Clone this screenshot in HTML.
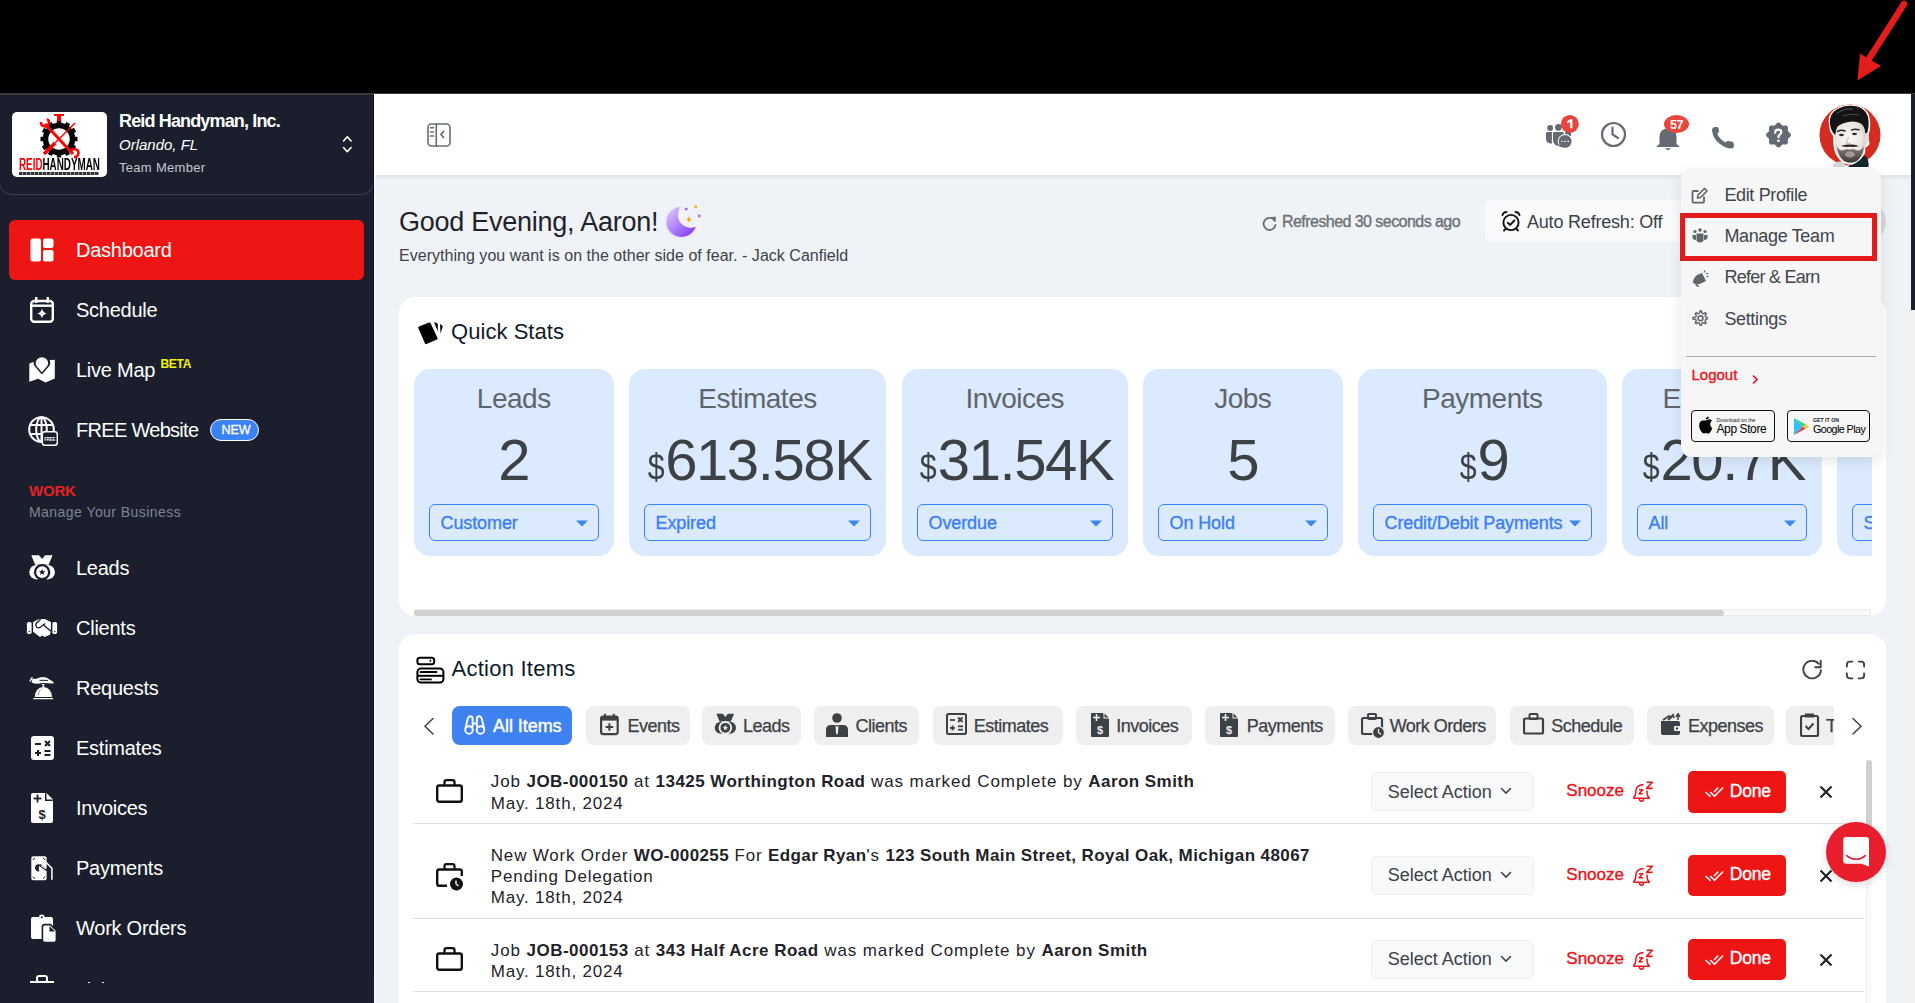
<!DOCTYPE html>
<html><head><meta charset="utf-8">
<style>
*{box-sizing:border-box;margin:0;padding:0}
html,body{width:1915px;height:1003px;overflow:hidden;background:#000;font-family:"Liberation Sans",sans-serif;position:relative}
.abs{position:absolute}
.t{position:absolute;white-space:nowrap;line-height:1}
b{font-weight:bold}
</style></head><body>

<div class="abs" style="left:0px;top:0px;width:1915px;height:93px;background:#000"></div>
<div class="abs" style="left:0px;top:93px;width:1915px;height:1px;background:#3a3a3a"></div>
<svg class="abs" style="left:1850px;top:0px;" width="65" height="90" viewBox="0 0 65 90"><line x1="54" y1="4" x2="17" y2="62" stroke="#e31c1c" stroke-width="6.5" stroke-linecap="round"/><polygon points="7.5,80.5 10,53.5 31,66" fill="#e31c1c"/></svg>
<div class="abs" style="left:0px;top:94px;width:374px;height:909px;background:#1b1f2d"></div>
<div class="abs" style="left:-1px;top:94px;width:375px;height:101px;border:1px solid #3a3f4b;border-radius:0 0 13px 13px;border-top:none"></div>
<div class="abs" style="left:373px;top:94px;width:1px;height:909px;background:#0e121c"></div>
<div class="abs" style="left:0px;top:94px;width:374px;height:1px;background:#3a3a3a"></div>
<div class="abs" style="left:12px;top:112px;width:95px;height:65px;background:#fff;border-radius:5px"></div>
<svg class="abs" style="left:12px;top:112px" width="95" height="65" viewBox="0 0 95 65">
<g transform="translate(47,27)">
<circle r="13.5" fill="none" stroke="#000" stroke-width="5.5"/>
<g fill="#000"><rect x="-2.2" y="-18.5" width="4.4" height="5" transform="rotate(0)"/><rect x="-2.2" y="-18.5" width="4.4" height="5" transform="rotate(30)"/><rect x="-2.2" y="-18.5" width="4.4" height="5" transform="rotate(60)"/><rect x="-2.2" y="-18.5" width="4.4" height="5" transform="rotate(90)"/><rect x="-2.2" y="-18.5" width="4.4" height="5" transform="rotate(120)"/><rect x="-2.2" y="-18.5" width="4.4" height="5" transform="rotate(150)"/><rect x="-2.2" y="-18.5" width="4.4" height="5" transform="rotate(180)"/><rect x="-2.2" y="-18.5" width="4.4" height="5" transform="rotate(210)"/><rect x="-2.2" y="-18.5" width="4.4" height="5" transform="rotate(240)"/><rect x="-2.2" y="-18.5" width="4.4" height="5" transform="rotate(270)"/><rect x="-2.2" y="-18.5" width="4.4" height="5" transform="rotate(300)"/><rect x="-2.2" y="-18.5" width="4.4" height="5" transform="rotate(330)"/></g>
<line x1="-14" y1="-15" x2="14" y2="15" stroke="#f00" stroke-width="3"/>
<line x1="16" y1="-16" x2="-4" y2="4" stroke="#f00" stroke-width="1.5"/>
<line x1="-4" y1="4" x2="-15" y2="15" stroke="#f00" stroke-width="3.5"/>
<path d="M-18,-17 a4,4 0 1,0 6,-3 M15,18 a4,4 0 1,0 -3,-6" stroke="#f00" stroke-width="2.5" fill="none"/>
<path d="M-5,-25 h10 v2 h-3 v5 h-4 v-5 h-3z" fill="#f00"/>
</g>
</svg>
<div class="t" style="left:19px;top:157.5px;height:13px;font-size:16px;font-weight:bold;line-height:13px;transform:scaleX(0.615);transform-origin:0 0;letter-spacing:0px"><span style="color:#f00">REID</span><span style="color:#000">HANDYMAN</span></div>
<div class="abs" style="left:19px;top:172px;width:80px;height:3px;background:repeating-linear-gradient(90deg,#333 0 3px,#999 3px 4px)"></div>
<div class="t" style="left:119.0px;top:112.1px;font-size:18px;color:#fff;font-weight:bold;letter-spacing:-0.85px;">Reid Handyman, Inc.</div>
<div class="t" style="left:119.0px;top:136.8px;font-size:15px;color:#fff;font-weight:normal;font-style:italic;">Orlando, FL</div>
<div class="t" style="left:119.0px;top:161.0px;font-size:13px;color:#c5c8ce;font-weight:normal;letter-spacing:0.3px;">Team Member</div>
<svg class="abs" style="left:340px;top:133px;" width="14" height="22" viewBox="0 0 14 22"><path d="M3.5,8 L7.3,3.8 L11.1,8 M3.5,14.5 L7.3,18.7 L11.1,14.5" stroke="#fff" stroke-width="1.6" fill="none" stroke-linecap="round" stroke-linejoin="round"/></svg>
<div class="abs" style="left:9px;top:220px;width:355px;height:60px;background:#ee1515;border-radius:6px"></div>
<svg class="abs" style="left:30px;top:238px;" width="24" height="24" viewBox="0 0 24 24"><rect x="0.5" y="0.5" width="10.5" height="23" rx="2" fill="#fff"/><rect x="13" y="0.5" width="10.5" height="9.5" rx="2" fill="#fff"/><rect x="13" y="12" width="10.5" height="11.5" rx="2" fill="#fff"/></svg>
<div class="t" style="left:76.0px;top:239.7px;font-size:20px;color:#fff;font-weight:normal;letter-spacing:-0.25px;">Dashboard</div>
<div class="t" style="left:76.0px;top:299.7px;font-size:20px;color:#fff;font-weight:normal;letter-spacing:-0.25px;">Schedule</div>
<div class="t" style="left:76.0px;top:359.7px;font-size:20px;color:#fff;font-weight:normal;letter-spacing:-0.25px;">Live Map</div>
<div class="t" style="left:160.5px;top:357.8px;font-size:12px;color:#f5f500;font-weight:bold;letter-spacing:-0.3px;">BETA</div>
<div class="t" style="left:76.0px;top:419.7px;font-size:20px;color:#fff;font-weight:normal;letter-spacing:-0.7px;">FREE Website</div>
<div class="abs" style="left:210px;top:419px;width:49px;height:22px;background:#3b82f6;border:1.5px solid #fff;border-radius:11px"></div>
<div class="t" style="left:221.5px;top:424.4px;font-size:12.5px;color:#fff;font-weight:normal;letter-spacing:-0.1px;-webkit-text-stroke:0.35px #fff;">NEW</div>
<div class="t" style="left:29.0px;top:482.8px;font-size:15px;color:#e42222;font-weight:bold;letter-spacing:-0.2px;">WORK</div>
<div class="t" style="left:29.0px;top:504.6px;font-size:14px;color:#7d8594;font-weight:normal;letter-spacing:0.45px;">Manage Your Business</div>
<div class="t" style="left:76.0px;top:557.7px;font-size:20px;color:#fff;font-weight:normal;letter-spacing:-0.25px;">Leads</div>
<div class="t" style="left:76.0px;top:617.7px;font-size:20px;color:#fff;font-weight:normal;letter-spacing:-0.25px;">Clients</div>
<div class="t" style="left:76.0px;top:677.7px;font-size:20px;color:#fff;font-weight:normal;letter-spacing:-0.25px;">Requests</div>
<div class="t" style="left:76.0px;top:737.7px;font-size:20px;color:#fff;font-weight:normal;letter-spacing:-0.25px;">Estimates</div>
<div class="t" style="left:76.0px;top:797.7px;font-size:20px;color:#fff;font-weight:normal;letter-spacing:-0.25px;">Invoices</div>
<div class="t" style="left:76.0px;top:857.7px;font-size:20px;color:#fff;font-weight:normal;letter-spacing:-0.25px;">Payments</div>
<div class="t" style="left:76.0px;top:917.7px;font-size:20px;color:#fff;font-weight:normal;letter-spacing:-0.25px;">Work Orders</div>
<svg class="abs" style="left:30px;top:297px;" width="24" height="26" viewBox="0 0 24 26"><rect x="1.2" y="4" width="21.6" height="20.8" rx="3" fill="none" stroke="#fff" stroke-width="2.4"/><rect x="1" y="7.5" width="22" height="2.4" fill="#fff"/><rect x="5" y="0" width="2.4" height="6" fill="#fff"/><rect x="16.6" y="0" width="2.4" height="6" fill="#fff"/><path d="M12,11.5 Q12.8,15.7 17,16.5 Q12.8,17.3 12,21.5 Q11.2,17.3 7,16.5 Q11.2,15.7 12,11.5z" fill="#fff"/></svg>
<svg class="abs" style="left:29px;top:357px;" width="27" height="27" viewBox="0 0 27 27"><path d="M0.3,6.5 L5,4.8 L22,3 L25.8,2.8 L25.8,21.6 L16.5,25.5 L9.3,21.7 L0.3,24.8z" fill="#fff"/><path d="M12.9,17.5 L6.8,10.5 Q4.5,8 4.5,6.3 A8.4,8.4 0 0,1 21.3,6.3 Q21.3,8 19,10.5z" fill="#1b1f2d"/><path d="M12.9,15.3 L8.3,9.9 Q6.6,8 6.6,6.5 A6.3,6.3 0 0,1 19.2,6.5 Q19.2,8 17.5,9.9z" fill="#fff"/></svg>
<svg class="abs" style="left:28px;top:416px;" width="30" height="30" viewBox="0 0 30 30"><g fill="none" stroke="#fff" stroke-width="2"><circle cx="13.5" cy="13.5" r="12.3"/><ellipse cx="13.5" cy="13.5" rx="5.3" ry="12.3"/><line x1="1.5" y1="9" x2="25.5" y2="9"/><line x1="1.5" y1="18" x2="25.5" y2="18"/><line x1="13.5" y1="1.2" x2="13.5" y2="25.8"/></g><rect x="14.3" y="15.8" width="15" height="13.5" rx="2.5" fill="#1b1f2d" stroke="#fff" stroke-width="1.5"/><text x="21.8" y="25" font-size="5.6" font-family="Liberation Sans" font-weight="bold" fill="#fff" text-anchor="middle" textLength="11" lengthAdjust="spacingAndGlyphs">FREE</text></svg>
<svg class="abs" style="left:29px;top:555px;" width="27" height="26" viewBox="0 0 27 26"><path d="M2.3,0.2 L10,0.2 L13.1,4.1 L16.2,0.2 L23.6,0.2 L19.7,9.7 L6.1,9.7z" fill="#fff"/><circle cx="7.6" cy="17.2" r="7.3" fill="#fff"/><circle cx="18.6" cy="17.2" r="7.3" fill="#fff"/><circle cx="13.1" cy="17.2" r="8.2" fill="#1b1f2d"/><circle cx="13.1" cy="17.2" r="5.9" fill="#fff"/><path d="M13.1,14 l0.95,2 2.2,.25 -1.65,1.5 .45,2.2 -1.95,-1.1 -1.95,1.1 .45,-2.2 -1.65,-1.5 2.2,-.25z" fill="#1b1f2d"/></svg>
<svg class="abs" style="left:26px;top:619px;" width="32" height="19" viewBox="0 0 32 19"><rect x="0.9" y="2.9" width="4.7" height="12" rx="1.6" fill="#fff"/><rect x="26.4" y="2.9" width="4.7" height="12" rx="1.6" fill="#fff"/><circle cx="3.3" cy="12.5" r=".75" fill="#1b1f2d"/><circle cx="28.7" cy="12.5" r=".75" fill="#1b1f2d"/><path d="M7.1,2.9 L12.8,0.2 L18.8,0.1 L24.9,3 L24.9,12.2 L23.9,15.8 L18.5,17.9 L16.4,16.4 L14,17.9 L7.1,12.8z" fill="#fff"/><path d="M14.6,0.3 L10.6,4 Q8.8,6.3 10.8,8.3 Q12.6,9.6 14.7,8 L19.3,4.4 M17.9,6.3 L24.8,12.2" stroke="#1b1f2d" stroke-width="1.3" fill="none"/></svg>
<svg class="abs" style="left:28px;top:676px;" width="28" height="25" viewBox="0 0 28 25"><path d="M1.2,5.2 L3.6,0.9 L4.9,1.5 L2.5,5.8z" fill="#fff"/><path d="M4.6,2.6 Q7,3.3 9,2.6 Q12,1 15.5,1.1 Q19,1.4 21.5,3.5 Q24.5,5 25.8,6.5 L25.5,7.3 Q23.5,7.8 21,7.3 Q17.5,7 14,7.1 Q10,7.9 6.5,7.6 Q4.5,7.2 3.6,6.3z" fill="#fff"/><path d="M11.8,4.3 L19.6,4.4" stroke="#1b1f2d" stroke-width="1" stroke-linecap="round"/><ellipse cx="15.2" cy="8.6" rx="1.8" ry=".7" fill="#fff"/><rect x="14.4" y="9.4" width="1.8" height="1.6" fill="#fff"/><path d="M6.8,20.9 Q7.5,11.2 15.3,10.9 Q23.2,11.2 24.1,20.9z" fill="#fff"/><path d="M10.5,18.5 Q10.8,14.5 13.5,13" stroke="#1b1f2d" stroke-width=".8" fill="none" stroke-dasharray="1.2 .8"/><rect x="5.2" y="22" width="20" height="1.3" rx=".5" fill="#fff"/></svg>
<svg class="abs" style="left:31px;top:736px;" width="23" height="24" viewBox="0 0 23 24"><rect x="0" y="0" width="23" height="24" rx="3" fill="#fff"/><g stroke="#1b1f2d" stroke-width="2"><line x1="4" y1="8" x2="10" y2="8"/><line x1="14" y1="5" x2="19" y2="10"/><line x1="19" y1="5" x2="14" y2="10"/><line x1="4" y1="17" x2="10" y2="17"/><line x1="7" y1="14" x2="7" y2="20"/><line x1="13.5" y1="15" x2="19.5" y2="15"/><line x1="13.5" y1="19" x2="19.5" y2="19"/></g></svg>
<svg class="abs" style="left:31px;top:793px;" width="22" height="30" viewBox="0 0 22 30"><path d="M0,2 a2,2 0 0,1 2,-2 L14,0 L22,8 L22,28 a2,2 0 0,1 -2,2 L2,30 a2,2 0 0,1 -2,-2z" fill="#fff"/><path d="M14,0 L14,8 L22,8" fill="#1b1f2d"/><path d="M15.5,0 L15.5,6.5 L22,6.5z" fill="#fff"/><g stroke="#1b1f2d" stroke-width="1.8"><line x1="2.5" y1="5.5" x2="10.5" y2="5.5"/><line x1="6.5" y1="1.5" x2="6.5" y2="9.5"/></g><text x="11" y="26" font-size="13" font-weight="bold" font-family="Liberation Sans" fill="#1b1f2d" text-anchor="middle">$</text></svg>
<svg class="abs" style="left:31px;top:856px;" width="23" height="25" viewBox="0 0 23 25"><rect x="0.3" y="0.2" width="15.3" height="24" rx="1.8" fill="#fff"/><g stroke="#1b1f2d" stroke-width="1" fill="none"><path d="M2,4 Q2.5,2.5 4,2"/><path d="M12,2 Q13.5,2.5 14,4"/><path d="M2,20.5 Q2.5,22 4,22.5"/><path d="M12,22.5 Q13.5,22 14,20.5"/></g><path d="M9.5,8.8 A3.6,3.6 0 1,0 8.5,15.3 Q6.5,12 9.5,8.8z" fill="#1b1f2d"/><path d="M9.6,9.5 L15,13.5" stroke="#1b1f2d" stroke-width="2.2" stroke-linecap="round"/><path d="M10.5,9.8 L14.5,12.6" stroke="#fff" stroke-width="1.2" stroke-linecap="round"/><path d="M15.3,6.5 L20.9,12.2 L20.9,23.8" stroke="#fff" stroke-width="1.5" fill="none"/></svg>
<svg class="abs" style="left:31px;top:914px;" width="27" height="30" viewBox="0 0 27 30"><rect x="0" y="3" width="22" height="22" rx="2" fill="#fff"/><circle cx="10.8" cy="3.2" r="2.8" fill="#fff"/><circle cx="10.8" cy="3.3" r="1" fill="#1b1f2d"/><path d="M11.4,13 a2.4,2.4 0 0,1 2.4,-2.4 L19.5,10.6 L25.4,16.5 L25.4,26.2 a2.4,2.4 0 0,1 -2.4,2.4 L13.8,28.6 a2.4,2.4 0 0,1 -2.4,-2.4z" fill="#fff" stroke="#1b1f2d" stroke-width="1.6"/><path d="M18.5,12 L18.5,17.5 L24,17.5z" fill="#1b1f2d"/></svg>
<div class="abs" style="left:0px;top:975px;width:374px;height:28px;background:#1b1f2d"></div>
<svg class="abs" style="left:30px;top:975px;" width="24" height="8" viewBox="0 0 24 8"><rect x="7" y="1" width="10" height="6" rx="2" fill="none" stroke="#fff" stroke-width="2"/><rect x="0" y="6" width="24" height="2" fill="#fff"/></svg>
<div class="abs" style="left:88px;top:982px;width:2px;height:1.5px;background:#fff"></div>
<div class="abs" style="left:102px;top:982px;width:2px;height:1.5px;background:#fff"></div>
<div class="abs" style="left:0px;top:983px;width:374px;height:20px;background:#1b1f2d"></div>
<div class="abs" style="left:374px;top:94px;width:1537px;height:81px;background:#fff"></div>
<div class="abs" style="left:374px;top:175px;width:1537px;height:5px;background:linear-gradient(#dfe3e8,#eff2f7)"></div>
<svg class="abs" style="left:427px;top:123px;" width="24" height="24" viewBox="0 0 24 24"><g fill="none" stroke="#676d75" stroke-width="1.6" stroke-linecap="round"><rect x="1" y="1" width="22" height="22" rx="3.5"/><line x1="9.3" y1="1" x2="9.3" y2="23"/><line x1="3.5" y1="4.8" x2="6.5" y2="4.8"/><line x1="3.5" y1="9" x2="6.5" y2="9"/><line x1="3.5" y1="13" x2="6.5" y2="13"/><path d="M16.5,8.5 L14,11.5 L16.5,14.5" stroke-width="1.8"/></g></svg>
<svg class="abs" style="left:1545px;top:113px;" width="40" height="38" viewBox="0 0 40 38"><g fill="#646b73"><circle cx="5.1" cy="15" r="2.9"/><circle cx="13.4" cy="14.3" r="3.4"/><path d="M1,20 a1,1 0 0,1 1,-1 L6.9,19 L6.9,30.7 Q1,30.7 1,25.5z"/><path d="M8,20 a1,1 0 0,1 1,-1 L17.5,19 Q18.8,19 18.8,20.2 L18.8,31 L14,33 Q8,32.5 8,27z"/><path d="M20.1,19 L25,19 Q26,19 26,20 L26,23 L20.1,23z"/></g><circle cx="20.1" cy="28.4" r="7.4" fill="#fff"/><circle cx="20.1" cy="28.4" r="6.4" fill="#646b73"/><path d="M14.5,28.5 L14.2,33.8 L19,34.5z" fill="#646b73"/><g fill="#fff"><rect x="16.3" y="27.8" width="1.4" height="1.2"/><rect x="19.4" y="27.8" width="1.4" height="1.2"/><rect x="22.5" y="27.8" width="1.4" height="1.2"/></g><circle cx="24.8" cy="10.9" r="9" fill="#e8453c"/><path d="M25.1,6.2 L27.4,6.2 L27.4,15.2 L25.1,15.2 L25.1,9 L22.2,10.4 L22.2,8.3z" fill="#fff"/></svg>
<svg class="abs" style="left:1600px;top:121px;" width="28" height="28" viewBox="0 0 28 28"><g fill="none" stroke="#646b73" stroke-width="2.2" stroke-linecap="round"><circle cx="13.5" cy="13.5" r="11.5"/><path d="M12.5,6.5 L12.5,13.5 L18,17"/></g></svg>
<svg class="abs" style="left:1655px;top:112px;" width="40" height="40" viewBox="0 0 40 40"><path d="M1.5,35 L4.5,31.5 L4.5,25.5 Q4.5,16.5 13,16.5 Q21.5,16.5 21.5,25.5 L21.5,31.5 L24.5,35z" fill="#646b73"/><path d="M10,36.3 h6 l-3,2.3z" fill="#646b73"/><ellipse cx="21.5" cy="12" rx="12.5" ry="9" fill="#e8453c"/><text x="21.5" y="16.5" font-size="12.5" font-weight="bold" font-family="Liberation Sans" fill="#fff" text-anchor="middle" letter-spacing="-0.5">57</text></svg>
<svg class="abs" style="left:1710px;top:124px;" width="27" height="27" viewBox="0 0 27 27"><path d="M4.5,3 Q2,3.5 2,6.5 Q3,15 10,20 Q16,24.5 21.5,24.5 Q24,24 24,21.5 L23.5,19 Q23,17.5 21.5,17.5 L18,17 Q16.5,17 15.5,18.5 Q12,17 9,13 Q7.5,10.5 7.5,9.5 Q9,8.5 9,7 L8.5,4 Q8,3 6.5,3z" fill="#646b73"/></svg>
<svg class="abs" style="left:1765px;top:122px" width="27" height="26" viewBox="0 0 27 26"><path d="M26.00,13.00 L25.90,13.61 L25.62,14.19 L25.19,14.73 L24.68,15.22 L24.15,15.67 L23.66,16.08 L23.28,16.50 L23.02,16.94 L22.89,17.44 L22.87,18.01 L22.92,18.64 L22.98,19.33 L22.99,20.04 L22.91,20.73 L22.70,21.34 L22.34,21.84 L21.84,22.20 L21.23,22.41 L20.54,22.49 L19.83,22.48 L19.14,22.42 L18.51,22.37 L17.94,22.39 L17.44,22.52 L17.00,22.78 L16.58,23.16 L16.17,23.65 L15.72,24.18 L15.23,24.69 L14.69,25.12 L14.11,25.40 L13.50,25.50 L12.89,25.40 L12.31,25.12 L11.77,24.69 L11.28,24.18 L10.83,23.65 L10.42,23.16 L10.00,22.78 L9.56,22.52 L9.06,22.39 L8.49,22.37 L7.86,22.42 L7.17,22.48 L6.46,22.49 L5.77,22.41 L5.16,22.20 L4.66,21.84 L4.30,21.34 L4.09,20.73 L4.01,20.04 L4.02,19.33 L4.08,18.64 L4.13,18.01 L4.11,17.44 L3.98,16.94 L3.72,16.50 L3.34,16.08 L2.85,15.67 L2.32,15.22 L1.81,14.73 L1.38,14.19 L1.10,13.61 L1.00,13.00 L1.10,12.39 L1.38,11.81 L1.81,11.27 L2.32,10.78 L2.85,10.33 L3.34,9.92 L3.72,9.50 L3.98,9.06 L4.11,8.56 L4.13,7.99 L4.08,7.36 L4.02,6.67 L4.01,5.96 L4.09,5.27 L4.30,4.66 L4.66,4.16 L5.16,3.80 L5.77,3.59 L6.46,3.51 L7.17,3.52 L7.86,3.58 L8.49,3.63 L9.06,3.61 L9.56,3.48 L10.00,3.22 L10.42,2.84 L10.83,2.35 L11.28,1.82 L11.77,1.31 L12.31,0.88 L12.89,0.60 L13.50,0.50 L14.11,0.60 L14.69,0.88 L15.23,1.31 L15.72,1.82 L16.17,2.35 L16.58,2.84 L17.00,3.22 L17.44,3.48 L17.94,3.61 L18.51,3.63 L19.14,3.58 L19.83,3.52 L20.54,3.51 L21.23,3.59 L21.84,3.80 L22.34,4.16 L22.70,4.66 L22.91,5.27 L22.99,5.96 L22.98,6.67 L22.92,7.36 L22.87,7.99 L22.89,8.56 L23.02,9.06 L23.28,9.50 L23.66,9.92 L24.15,10.33 L24.68,10.78 L25.19,11.27 L25.62,11.81 L25.90,12.39z" fill="#646b73"/><g transform="translate(13.5,13) scale(0.88) translate(-13.8,-13)"><path d="M10,10.5 Q10,7 13.5,7 Q17,7 17,10 Q17,12 14.8,13 Q13.8,13.5 13.8,15.5" stroke="#fff" stroke-width="2.5" fill="none" stroke-linecap="round"/><circle cx="13.8" cy="19.5" r="1.5" fill="#fff"/></g></svg>
<svg class="abs" style="left:1815px;top:100px;" width="70" height="70" viewBox="0 0 70 70"><defs><clipPath id="avc"><path d="M35,4.5 A30.5,30.5 0 1,1 34.9,4.5z M18,58 L56,58 L56,67 L18,67z"/></clipPath>
<radialGradient id="skin" cx="0.45" cy="0.42" r="0.62"><stop offset="0" stop-color="#fbf8f6"/><stop offset="0.65" stop-color="#ede5e1"/><stop offset="1" stop-color="#c4b8b3"/></radialGradient>
<linearGradient id="brd" x1="0" y1="0" x2="0" y2="1"><stop offset="0" stop-color="#8d8583"/><stop offset="1" stop-color="#3f3937"/></linearGradient></defs>
<circle cx="35" cy="35" r="30.5" fill="#d42c20"/>
<g clip-path="url(#avc)">
<path d="M16,68 Q20,60 29,62 L31,68z" fill="#d8d8d8"/>
<path d="M32,68 L45,56 L51,56 Q55,62 53,68z" fill="#15262c"/>
<path d="M14,24 Q12,13 22,8 Q32,2 45,6 Q54,10 55,20 Q56,28 53.5,35 L54.5,44 Q52,48 50.5,47 L50,53 Q46,61 38,64.5 Q29,65.5 24,59 Q19,53 18.5,45 L18,36 Q14,31 14,24z" fill="#fff"/>
<path d="M19.5,32 Q19.5,23 26.5,22 Q38,19.5 47,23 Q51,27 51,34 L51.5,40 Q52,44 49.5,47 L48.5,52.5 Q45.5,60 38,63 Q30,64 25.5,58 Q20.5,52 20,44z" fill="url(#skin)"/>
<ellipse cx="51.8" cy="39" rx="2.2" ry="4.6" fill="#e6ddd8"/>
</g>
<path d="M15,24 Q13.5,14 22.5,9 Q32,3.5 44,7 Q52.5,10.5 53.5,20 Q54,28 52,33.5 L50.2,33 Q50,26.5 46,23.5 Q40,20.5 33.5,22 Q26.5,23 22.5,26.5 Q20.5,30 20.2,35 Q16,31.5 15,24z" fill="#141414"/>
<path d="M22,13 Q30,8 38,9 M28,16 Q36,13 44,15" stroke="#4a4a4a" stroke-width="1.1" fill="none"/>
<path d="M21.5,45.5 Q23,56.5 29,61 Q35,64 42,61 Q48,56 49,46 Q46,51 42,50.5 Q38.5,48.5 35,49.5 Q31,48.5 27,50.5 Q23.5,50 21.5,45.5z" fill="url(#brd)"/>
<ellipse cx="35" cy="54.5" rx="5" ry="3" fill="#c9c0bd" opacity=".6"/>
<path d="M26,46 Q30,44 35,44.6 Q40,44 44,46 Q40,47.2 35,46.8 Q30,47.2 26,46z" fill="#2e2826"/>
<path d="M22.5,31.5 Q26,29.5 30,31 M36.5,30 Q40,28.5 44,29.8" stroke="#2a2a2a" stroke-width="1.5" fill="none" stroke-linecap="round"/>
<ellipse cx="26.5" cy="35" rx="2.5" ry="1.15" fill="#2a2a2a"/><ellipse cx="39.5" cy="34" rx="2.5" ry="1.15" fill="#2a2a2a"/>
<path d="M33.5,37 Q32.5,41.5 30.8,43 Q33,44 35.8,43.2" stroke="#c2b5b0" stroke-width="1" fill="none"/>
</svg>
<div class="abs" style="left:374px;top:180px;width:1537px;height:823px;background:#eff2f7"></div>
<div class="abs" style="left:374px;top:175px;width:2px;height:828px;background:#f7f8fb"></div>
<div class="t" style="left:399.0px;top:208.8px;font-size:27px;color:#1f2329;font-weight:normal;letter-spacing:-0.25px;">Good Evening, Aaron!</div>
<svg class="abs" style="left:660px;top:200px;" width="45" height="45" viewBox="0 0 45 45"><defs><linearGradient id="mg" x1="0" y1="0" x2="1" y2="1"><stop offset="0" stop-color="#e2d2fc"/><stop offset="1" stop-color="#7a2cf6"/></linearGradient><mask id="mm"><rect width="45" height="45" fill="#fff"/><circle cx="30.9" cy="14.9" r="13" fill="#000"/></mask><filter id="mb" x="-50%" y="-50%" width="200%" height="200%"><feGaussianBlur stdDeviation="1.5"/></filter></defs>
<circle cx="21.4" cy="23" r="15" fill="#b9a6e8" opacity=".35" filter="url(#mb)" mask="url(#mm)"/>
<circle cx="21.4" cy="21.9" r="15" fill="url(#mg)" mask="url(#mm)"/>
<path d="M29,16.5 Q29.6,19 32,19.5 Q29.6,20 29,22.5 Q28.4,20 26,19.5 Q28.4,19 29,16.5z" fill="#ffa500"/>
<circle cx="35.7" cy="6.8" r="1.5" fill="#ffaa10"/><circle cx="26.2" cy="9" r="1.6" fill="#a46cf8"/><circle cx="39.3" cy="16" r="1.4" fill="#a46cf8"/></svg>
<div class="t" style="left:399.0px;top:247.5px;font-size:16px;color:#3d4249;font-weight:normal;letter-spacing:0.03px;">Everything you want is on the other side of fear. - Jack Canfield</div>
<svg class="abs" style="left:1261px;top:215px;" width="17" height="17" viewBox="0 0 17 17"><path d="M13.5,5.5 A6,6 0 1,0 14.5,10" stroke="#6b7075" stroke-width="1.8" fill="none" stroke-linecap="round"/><path d="M10.5,2.5 L14.5,2 L14,6.5z" fill="#6b7075" stroke="#6b7075" stroke-width="1"/></svg>
<div class="t" style="left:1282.0px;top:213.8px;font-size:16px;color:#6b7075;font-weight:normal;letter-spacing:-0.55px;-webkit-text-stroke:0.35px #6b7075;">Refreshed 30 seconds ago</div>
<div class="abs" style="left:1846px;top:202px;width:40px;height:40px;background:#d9d9d9;border-radius:50%"></div>
<div class="abs" style="left:1485px;top:200px;width:230px;height:42px;background:#f9fafb;border-radius:6px"></div>
<svg class="abs" style="left:1500px;top:210px;" width="22" height="22" viewBox="0 0 22 22"><g fill="none" stroke="#111" stroke-width="1.9" stroke-linecap="round"><circle cx="11" cy="12.5" r="7.6"/><path d="M7.8,12.8 L10.2,15 L14.3,10.5"/><path d="M2.5,5 Q3.5,2 6.5,2 M19.5,5 Q18.5,2 15.5,2"/><line x1="5.5" y1="19" x2="4" y2="20.5"/><line x1="16.5" y1="19" x2="18" y2="20.5"/></g></svg>
<div class="t" style="left:1527.0px;top:212.8px;font-size:18px;color:#3c4043;font-weight:normal;letter-spacing:-0.2px;">Auto Refresh: Off</div>
<div class="abs" style="left:399px;top:297px;width:1487px;height:319px;background:#fff;border-radius:16px"></div>
<svg class="abs" style="left:417px;top:321px;" width="27" height="25" viewBox="0 0 27 25"><path d="M2.6,5.2 L12,1.5 Q13,1.1 13.5,2 L20.5,16.9 Q21,18 19.9,18.5 L9.5,23.1 Q8.4,23.5 8,22.4 L1.2,6.8 Q0.9,5.8 2.6,5.2z" fill="#000"/><path d="M17,1.3 Q19.5,1.2 20.8,3 L20.8,10.3z" fill="#000"/><path d="M23.1,3.1 Q25.5,4 25.7,5.8 L23.5,12.6z" fill="#000"/></svg>
<div class="t" style="left:451.0px;top:321.4px;font-size:22px;color:#0f1b2a;font-weight:normal;letter-spacing:0.05px;">Quick Stats</div>
<div class="abs" style="left:414px;top:609px;width:1457px;height:7px;background:#fafafa;border:1px solid #ececec"></div>
<div class="abs" style="left:414px;top:609.5px;width:1310px;height:6px;background:#cfd0d2;border-radius:3px"></div>
<div class="abs" style="left:414px;top:360px;width:1458px;height:200px;overflow:hidden">
<div class="abs" style="left:0px;top:9px;width:199.5px;height:187px;background:#dbeafe;border-radius:16px"></div>
<div class="t" style="left:0px;width:199.5px;text-align:center;top:24.5px;font-size:28px;color:#5f656c;letter-spacing:-0.5px">Leads</div>
<div class="t" style="left:0px;width:199.5px;text-align:center;top:70.9px;font-size:58px;color:#3c4146;letter-spacing:-1.4px">2</div>
<div class="abs" style="left:15px;top:144px;width:169.5px;height:37px;border:1px solid #3b82f6;border-radius:6px;overflow:hidden"><div class="t" style="left:10.5px;top:9.3px;font-size:18px;font-weight:normal;-webkit-text-stroke:0.35px #3b7ff0;color:#3b7ff0;letter-spacing:-0.1px">Customer</div><svg class="abs" style="right:10px;top:14.5px" width="12" height="7"><path d="M0,0.5 L12,0.5 L6,6.5z" fill="#3b82f6"/></svg></div>
<div class="abs" style="left:215px;top:9px;width:257px;height:187px;background:#dbeafe;border-radius:16px"></div>
<div class="t" style="left:215px;width:257px;text-align:center;top:24.5px;font-size:28px;color:#5f656c;letter-spacing:-0.5px">Estimates</div>
<div class="t" style="left:215px;width:257px;text-align:center;top:70.9px;font-size:58px;color:#3c4146;letter-spacing:-1.4px"><span style="display:inline-block;font-size:37px;letter-spacing:0;margin-right:1px;transform:scaleX(0.82);transform-origin:100% 100%;line-height:1">$</span>613.58K</div>
<div class="abs" style="left:230px;top:144px;width:227px;height:37px;border:1px solid #3b82f6;border-radius:6px;overflow:hidden"><div class="t" style="left:10.5px;top:9.3px;font-size:18px;font-weight:normal;-webkit-text-stroke:0.35px #3b7ff0;color:#3b7ff0;letter-spacing:-0.1px">Expired</div><svg class="abs" style="right:10px;top:14.5px" width="12" height="7"><path d="M0,0.5 L12,0.5 L6,6.5z" fill="#3b82f6"/></svg></div>
<div class="abs" style="left:488px;top:9px;width:225.5px;height:187px;background:#dbeafe;border-radius:16px"></div>
<div class="t" style="left:488px;width:225.5px;text-align:center;top:24.5px;font-size:28px;color:#5f656c;letter-spacing:-0.5px">Invoices</div>
<div class="t" style="left:488px;width:225.5px;text-align:center;top:70.9px;font-size:58px;color:#3c4146;letter-spacing:-1.4px"><span style="display:inline-block;font-size:37px;letter-spacing:0;margin-right:1px;transform:scaleX(0.82);transform-origin:100% 100%;line-height:1">$</span>31.54K</div>
<div class="abs" style="left:503px;top:144px;width:195.5px;height:37px;border:1px solid #3b82f6;border-radius:6px;overflow:hidden"><div class="t" style="left:10.5px;top:9.3px;font-size:18px;font-weight:normal;-webkit-text-stroke:0.35px #3b7ff0;color:#3b7ff0;letter-spacing:-0.1px">Overdue</div><svg class="abs" style="right:10px;top:14.5px" width="12" height="7"><path d="M0,0.5 L12,0.5 L6,6.5z" fill="#3b82f6"/></svg></div>
<div class="abs" style="left:729px;top:9px;width:199.5px;height:187px;background:#dbeafe;border-radius:16px"></div>
<div class="t" style="left:729px;width:199.5px;text-align:center;top:24.5px;font-size:28px;color:#5f656c;letter-spacing:-0.5px">Jobs</div>
<div class="t" style="left:729px;width:199.5px;text-align:center;top:70.9px;font-size:58px;color:#3c4146;letter-spacing:-1.4px">5</div>
<div class="abs" style="left:744px;top:144px;width:169.5px;height:37px;border:1px solid #3b82f6;border-radius:6px;overflow:hidden"><div class="t" style="left:10.5px;top:9.3px;font-size:18px;font-weight:normal;-webkit-text-stroke:0.35px #3b7ff0;color:#3b7ff0;letter-spacing:-0.1px">On Hold</div><svg class="abs" style="right:10px;top:14.5px" width="12" height="7"><path d="M0,0.5 L12,0.5 L6,6.5z" fill="#3b82f6"/></svg></div>
<div class="abs" style="left:944px;top:9px;width:248.5px;height:187px;background:#dbeafe;border-radius:16px"></div>
<div class="t" style="left:944px;width:248.5px;text-align:center;top:24.5px;font-size:28px;color:#5f656c;letter-spacing:-0.5px">Payments</div>
<div class="t" style="left:944px;width:248.5px;text-align:center;top:70.9px;font-size:58px;color:#3c4146;letter-spacing:-1.4px"><span style="display:inline-block;font-size:37px;letter-spacing:0;margin-right:1px;transform:scaleX(0.82);transform-origin:100% 100%;line-height:1">$</span>9</div>
<div class="abs" style="left:959px;top:144px;width:218.5px;height:37px;border:1px solid #3b82f6;border-radius:6px;overflow:hidden"><div class="t" style="left:10.5px;top:9.3px;font-size:18px;font-weight:normal;-webkit-text-stroke:0.35px #3b7ff0;color:#3b7ff0;letter-spacing:-0.1px">Credit/Debit Payments</div><svg class="abs" style="right:10px;top:14.5px" width="12" height="7"><path d="M0,0.5 L12,0.5 L6,6.5z" fill="#3b82f6"/></svg></div>
<div class="abs" style="left:1208px;top:9px;width:200px;height:187px;background:#dbeafe;border-radius:16px"></div>
<div class="t" style="left:1208px;width:200px;text-align:center;top:24.5px;font-size:28px;color:#5f656c;letter-spacing:-0.5px">Expenses</div>
<div class="t" style="left:1208px;width:200px;text-align:center;top:70.9px;font-size:58px;color:#3c4146;letter-spacing:-1.4px"><span style="display:inline-block;font-size:37px;letter-spacing:0;margin-right:1px;transform:scaleX(0.82);transform-origin:100% 100%;line-height:1">$</span>20.7K</div>
<div class="abs" style="left:1223px;top:144px;width:170px;height:37px;border:1px solid #3b82f6;border-radius:6px;overflow:hidden"><div class="t" style="left:10.5px;top:9.3px;font-size:18px;font-weight:normal;-webkit-text-stroke:0.35px #3b7ff0;color:#3b7ff0;letter-spacing:-0.1px">All</div><svg class="abs" style="right:10px;top:14.5px" width="12" height="7"><path d="M0,0.5 L12,0.5 L6,6.5z" fill="#3b82f6"/></svg></div>
<div class="abs" style="left:1423px;top:9px;width:200px;height:187px;background:#dbeafe;border-radius:16px"></div>
<div class="t" style="left:1423px;width:200px;text-align:center;top:24.5px;font-size:28px;color:#5f656c;letter-spacing:-0.5px">Schedule</div>
<div class="t" style="left:1423px;width:200px;text-align:center;top:70.9px;font-size:58px;color:#3c4146;letter-spacing:-1.4px">0</div>
<div class="abs" style="left:1438px;top:144px;width:170px;height:37px;border:1px solid #3b82f6;border-radius:6px;overflow:hidden"><div class="t" style="left:10.5px;top:9.3px;font-size:18px;font-weight:normal;-webkit-text-stroke:0.35px #3b7ff0;color:#3b7ff0;letter-spacing:-0.1px">Scheduled</div><svg class="abs" style="right:10px;top:14.5px" width="12" height="7"><path d="M0,0.5 L12,0.5 L6,6.5z" fill="#3b82f6"/></svg></div>
</div>
<div class="abs" style="left:399px;top:634px;width:1487px;height:400px;background:#fff;border-radius:16px"></div>
<svg class="abs" style="left:415px;top:656px;" width="31" height="29" viewBox="0 0 31 29"><g fill="none" stroke="#000" stroke-width="2"><rect x="2.4" y="1.8" width="16.8" height="6.4" rx="2.5"/><rect x="2.4" y="12.6" width="26" height="14" rx="3.5"/><line x1="2.4" y1="19.8" x2="28.4" y2="19.8"/></g><circle cx="15.4" cy="4.8" r="1" fill="#000"/><g stroke="#000" stroke-width="1.8" stroke-linecap="round"><line x1="5.5" y1="16" x2="21.5" y2="16"/><line x1="5.5" y1="23.4" x2="16" y2="23.4"/></g></svg>
<div class="t" style="left:451.5px;top:657.9px;font-size:22px;color:#0f1b2a;font-weight:normal;letter-spacing:0.25px;">Action Items</div>
<svg class="abs" style="left:1801px;top:660px;" width="22" height="21" viewBox="0 0 22 21"><path d="M17.8,3.8 A8.8,8.8 0 1,0 19.9,10.3" stroke="#3c4146" stroke-width="1.9" fill="none" stroke-linecap="round"/><path d="M19.7,0.8 V7.2 H14.2" stroke="#3c4146" stroke-width="1.9" fill="none" stroke-linecap="round" stroke-linejoin="round"/></svg>
<svg class="abs" style="left:1845px;top:660px;" width="21" height="21" viewBox="0 0 21 21"><path d="M1.9,6.5 V4.5 Q1.9,1.6 4.8,1.6 H7.4 M13.6,1.6 H16.2 Q19.1,1.6 19.1,4.5 V6.5 M19.1,13.5 V15.5 Q19.1,18.4 16.2,18.4 H13.6 M7.4,18.4 H4.8 Q1.9,18.4 1.9,15.5 V13.5" stroke="#3c4146" stroke-width="1.9" fill="none" stroke-linecap="round"/></svg>
<svg class="abs" style="left:421.5px;top:717px;" width="14" height="19" viewBox="0 0 14 19"><path d="M11,1.5 L3,9.2 L11,17" stroke="#3c4146" stroke-width="1.5" fill="none" stroke-linecap="round"/></svg>
<svg class="abs" style="left:1849.5px;top:717px;" width="14" height="19" viewBox="0 0 14 19"><path d="M3,1.5 L11,9.2 L3,17" stroke="#3c4146" stroke-width="1.5" fill="none" stroke-linecap="round"/></svg>
<div class="abs" style="left:440px;top:700px;width:1394px;height:50px;overflow:hidden">
<div class="abs" style="left:12px;top:6.3px;width:120px;height:38.5px;background:#3d82f0;border-radius:8px"></div>
<div class="t" style="left:53px;top:16.6px;font-size:18px;color:#fff;font-weight:normal;-webkit-text-stroke:0.45px #fff;letter-spacing:-0.05px">All Items</div>
<svg class="abs" style="left:24px;top:13px" width="26" height="26" viewBox="0 0 26 26"><g fill="none" stroke="#fff" stroke-width="1.9"><circle cx="5" cy="17" r="3.8"/><circle cx="16.5" cy="17" r="3.8"/><path d="M1.3,16 L3.8,5.5 Q4.6,3 6.6,3.3 Q8.6,3.6 8.6,6 L8.6,14.5 M20.2,16 L17.7,5.5 Q16.9,3 14.9,3.3 Q12.9,3.6 12.9,6 L12.9,14.5 M8.6,10.5 H12.9"/></g></svg>
<div class="abs" style="left:146px;top:6.3px;width:103.60000000000002px;height:38.5px;background:#efefef;border-radius:8px"></div>
<div class="t" style="left:187.5px;top:16.6px;font-size:18px;color:#3c4146;font-weight:normal;-webkit-text-stroke:0.25px #3c4146;letter-spacing:-0.5px">Events</div>
<svg class="abs" style="left:159.5px;top:13px" width="26" height="26" viewBox="0 0 26 26"><rect x="1.1" y="3.5" width="16.6" height="17.6" rx="2" fill="none" stroke="#3c4146" stroke-width="2.2"/><rect x="1" y="3" width="17" height="4.6" fill="#3c4146"/><rect x="4" y="0.8" width="2" height="3.5" fill="#3c4146"/><rect x="12.8" y="0.8" width="2" height="3.5" fill="#3c4146"/><path d="M9.4,10.3 V17.8 M5.6,14 H13.2" stroke="#3c4146" stroke-width="2"/></svg>
<div class="abs" style="left:262px;top:6.3px;width:99.29999999999995px;height:38.5px;background:#efefef;border-radius:8px"></div>
<div class="t" style="left:303px;top:16.6px;font-size:18px;color:#3c4146;font-weight:normal;-webkit-text-stroke:0.25px #3c4146;letter-spacing:-0.5px">Leads</div>
<svg class="abs" style="left:274px;top:13px" width="26" height="26" viewBox="0 0 26 26"><g transform="translate(0.5,0.5) scale(0.83)"><path d="M2.3,0.2 L10,0.2 L13.1,4.1 L16.2,0.2 L23.6,0.2 L19.7,9.7 L6.1,9.7z" fill="#3c4146"/><circle cx="7.6" cy="17.2" r="7.3" fill="#3c4146"/><circle cx="18.6" cy="17.2" r="7.3" fill="#3c4146"/><circle cx="13.1" cy="17.2" r="8.2" fill="#efefef"/><circle cx="13.1" cy="17.2" r="5.9" fill="#3c4146"/><path d="M13.1,14 l0.95,2 2.2,.25 -1.65,1.5 .45,2.2 -1.95,-1.1 -1.95,1.1 .45,-2.2 -1.65,-1.5 2.2,-.25z" fill="#efefef"/></g></svg>
<div class="abs" style="left:374.4px;top:6.3px;width:105.0px;height:38.5px;background:#efefef;border-radius:8px"></div>
<div class="t" style="left:415.6px;top:16.6px;font-size:18px;color:#3c4146;font-weight:normal;-webkit-text-stroke:0.25px #3c4146;letter-spacing:-0.5px">Clients</div>
<svg class="abs" style="left:386px;top:13px" width="26" height="26" viewBox="0 0 26 26"><circle cx="11" cy="5" r="4.8" fill="#3c4146"/><path d="M0,24 L0,17 Q0,12 5,12 L17,12 Q22,12 22,17 L22,24z" fill="#3c4146"/><path d="M9.5,12 L11,14 L12.5,12 L12,20 L11,22 L10,20z" fill="#efefef"/></svg>
<div class="abs" style="left:493px;top:6.3px;width:129.5px;height:38.5px;background:#efefef;border-radius:8px"></div>
<div class="t" style="left:533.7px;top:16.6px;font-size:18px;color:#3c4146;font-weight:normal;-webkit-text-stroke:0.25px #3c4146;letter-spacing:-0.5px">Estimates</div>
<svg class="abs" style="left:506px;top:13px" width="26" height="26" viewBox="0 0 26 26"><rect x="1" y="1" width="19" height="20" rx="1.5" fill="none" stroke="#3c4146" stroke-width="2"/><g stroke="#3c4146" stroke-width="1.8"><line x1="4" y1="7" x2="9" y2="7"/><line x1="12" y1="4.5" x2="16.5" y2="9"/><line x1="16.5" y1="4.5" x2="12" y2="9"/><line x1="4" y1="15" x2="9" y2="15"/><line x1="6.5" y1="12.5" x2="6.5" y2="17.5"/><line x1="12" y1="13.3" x2="17" y2="13.3"/><line x1="12" y1="16.7" x2="17" y2="16.7"/></g></svg>
<div class="abs" style="left:636px;top:6.3px;width:116.29999999999995px;height:38.5px;background:#efefef;border-radius:8px"></div>
<div class="t" style="left:676.3px;top:16.6px;font-size:18px;color:#3c4146;font-weight:normal;-webkit-text-stroke:0.25px #3c4146;letter-spacing:-0.5px">Invoices</div>
<svg class="abs" style="left:650.5px;top:13px" width="26" height="26" viewBox="0 0 26 26"><path d="M0,1 a1,1 0 0,1 1,-1 L12,0 L18,6 L18,23 a1,1 0 0,1 -1,1 L1,24 a1,1 0 0,1 -1,-1z" fill="#3c4146"/><path d="M12.5,0 L12.5,5.5 L18,5.5" fill="#efefef"/><path d="M13.5,0.5 L13.5,4.5 L17.5,4.5z" fill="#3c4146"/><g stroke="#efefef" stroke-width="1.6"><line x1="2" y1="4.5" x2="9" y2="4.5"/><line x1="5.5" y1="1" x2="5.5" y2="8"/></g><text x="9" y="20.5" font-size="11" font-weight="bold" font-family="Liberation Sans" fill="#efefef" text-anchor="middle">$</text></svg>
<div class="abs" style="left:765px;top:6.3px;width:129.5px;height:38.5px;background:#efefef;border-radius:8px"></div>
<div class="t" style="left:806.8px;top:16.6px;font-size:18px;color:#3c4146;font-weight:normal;-webkit-text-stroke:0.25px #3c4146;letter-spacing:-0.5px">Payments</div>
<svg class="abs" style="left:779.7px;top:13px" width="26" height="26" viewBox="0 0 26 26"><path d="M0,1 a1,1 0 0,1 1,-1 L12,0 L18,6 L18,23 a1,1 0 0,1 -1,1 L1,24 a1,1 0 0,1 -1,-1z" fill="#3c4146"/><path d="M12.5,0 L12.5,5.5 L18,5.5" fill="#efefef"/><path d="M13.5,0.5 L13.5,4.5 L17.5,4.5z" fill="#3c4146"/><g stroke="#efefef" stroke-width="1.6"><line x1="2" y1="4.5" x2="9" y2="4.5"/><line x1="5.5" y1="1" x2="5.5" y2="8"/></g><text x="9" y="20.5" font-size="11" font-weight="bold" font-family="Liberation Sans" fill="#efefef" text-anchor="middle">$</text></svg>
<div class="abs" style="left:908px;top:6.3px;width:148.29999999999995px;height:38.5px;background:#efefef;border-radius:8px"></div>
<div class="t" style="left:949.7px;top:16.6px;font-size:18px;color:#3c4146;font-weight:normal;-webkit-text-stroke:0.25px #3c4146;letter-spacing:-0.5px">Work Orders</div>
<svg class="abs" style="left:920.8px;top:13px" width="26" height="26" viewBox="0 0 26 26"><rect x="1" y="5" width="20" height="16" rx="1.5" fill="none" stroke="#3c4146" stroke-width="2.2"/><rect x="7" y="1" width="8" height="5" rx="1" fill="none" stroke="#3c4146" stroke-width="2"/><circle cx="17.5" cy="19.5" r="6" fill="#3c4146" stroke="#efefef" stroke-width="1.2"/><path d="M17.5,16 V19.5 L20,21.5" stroke="#efefef" stroke-width="1.3" fill="none"/></svg>
<div class="abs" style="left:1070px;top:6.3px;width:123.5px;height:38.5px;background:#efefef;border-radius:8px"></div>
<div class="t" style="left:1111.2px;top:16.6px;font-size:18px;color:#3c4146;font-weight:normal;-webkit-text-stroke:0.25px #3c4146;letter-spacing:-0.5px">Schedule</div>
<svg class="abs" style="left:1083px;top:13px" width="26" height="26" viewBox="0 0 26 26"><rect x="1" y="5.5" width="19" height="15" rx="1.5" fill="none" stroke="#3c4146" stroke-width="2.2"/><rect x="6.5" y="1" width="8" height="5" rx="1" fill="none" stroke="#3c4146" stroke-width="2"/></svg>
<div class="abs" style="left:1206.8px;top:6.3px;width:127.0px;height:38.5px;background:#efefef;border-radius:8px"></div>
<div class="t" style="left:1248px;top:16.6px;font-size:18px;color:#3c4146;font-weight:normal;-webkit-text-stroke:0.25px #3c4146;letter-spacing:-0.5px">Expenses</div>
<svg class="abs" style="left:1221px;top:13px" width="26" height="26" viewBox="0 0 26 26"><path d="M0,8 L17,8 Q19,8 19,10 L19,20 Q19,22 17,22 L2,22 Q0,22 0,20z" fill="#3c4146"/><path d="M2,7 L8,3 L10,6 M7,7 L12,2 L13,5" stroke="#3c4146" stroke-width="1.8" fill="none"/><path d="M15,4 L17,0.5 L19,4 M17,1 V7" stroke="#3c4146" stroke-width="1.5" fill="none"/><rect x="13" y="13" width="7" height="5" rx="1" fill="#efefef"/><circle cx="16" cy="15.5" r="1.2" fill="#3c4146"/></svg>
<div class="abs" style="left:1345.7px;top:6.3px;width:164.29999999999995px;height:38.5px;background:#efefef;border-radius:8px"></div>
<div class="t" style="left:1386px;top:16.6px;font-size:18px;color:#3c4146;font-weight:normal;-webkit-text-stroke:0.25px #3c4146;letter-spacing:-0.5px">Tasks</div>
<svg class="abs" style="left:1360px;top:13px" width="26" height="26" viewBox="0 0 26 26"><rect x="1" y="3" width="17" height="20" rx="1.5" fill="none" stroke="#3c4146" stroke-width="2.2"/><rect x="5" y="0.5" width="9" height="4" fill="#3c4146"/><path d="M5.5,13 L8.5,16 L13.5,10.5" stroke="#3c4146" stroke-width="2" fill="none"/></svg>
</div>
<svg class="abs" style="left:436px;top:778.5px;" width="28" height="28" viewBox="0 0 28 28"><rect x="1.2" y="6.5" width="24.6" height="16.3" rx="2" fill="none" stroke="#111" stroke-width="2.4"/><path d="M8.5,7 V3 Q8.5,1.2 10.3,1.2 H16.7 Q18.5,1.2 18.5,3 V7" fill="none" stroke="#111" stroke-width="2.3"/></svg>
<div class="t" style="left:490.8px;top:773.0px;font-size:17px;color:#1f2328;font-weight:normal;letter-spacing:0.9px;">Job <b style="letter-spacing:0.45px">JOB-000150</b> at <b style="letter-spacing:0.45px">13425 Worthington Road</b> was marked Complete by <b style="letter-spacing:0.45px">Aaron Smith</b></div>
<div class="t" style="left:490.8px;top:795.0px;font-size:17px;color:#1f2328;font-weight:normal;letter-spacing:0.8px;">May. 18th, 2024</div>
<div class="abs" style="left:1371px;top:772px;width:163px;height:39px;background:#f8f9fa;border:1px solid #eceef0;border-radius:5px"></div>
<div class="t" style="left:1387.7px;top:782.8px;font-size:18px;color:#3c4146;font-weight:normal;letter-spacing:0px;">Select Action</div>
<svg class="abs" style="left:1500px;top:787px;" width="12" height="8" viewBox="0 0 12 8"><path d="M1.5,1.5 L6,6 L10.5,1.5" stroke="#3c4146" stroke-width="1.6" fill="none" stroke-linecap="round"/></svg>
<div class="t" style="left:1566.3px;top:782.3px;font-size:17px;color:#e8141a;font-weight:normal;letter-spacing:0px;-webkit-text-stroke:0.35px #e8141a;">Snooze</div>
<svg class="abs" style="left:1632px;top:781px;" width="22" height="22" viewBox="0 0 22 22"><g stroke="#e8141a" fill="none" stroke-width="1.5" stroke-linejoin="round"><path d="M1.3,17.3 H17.3 Q15,15 15,11 V9.5 M1.3,17.3 Q3.8,15 3.8,11 Q3.8,5 9.5,3.8 Q10.5,3.6 11.5,3.8"/><path d="M7.5,17.8 Q7.5,20.3 9.5,20.3 Q11.5,20.3 11.5,17.8"/><path d="M7,8.8 H10.8 L7,12.8 H10.8" stroke-width="1.4"/><path d="M14.5,1.3 H20.4 L14.5,7.4 H20.6" stroke-width="1.6"/></g></svg>
<div class="abs" style="left:1687.8px;top:771.4px;width:98px;height:41.6px;background:#ee1515;border-radius:5px"></div>
<svg class="abs" style="left:1704px;top:787px;" width="20" height="12" viewBox="0 0 20 12"><path d="M2,5.5 L6,9.2 M6.7,5.5 L10.5,9.2 L18.6,1 M10.5,4.5 L13.6,1.2" stroke="#fff" stroke-width="1.6" fill="none" stroke-linecap="round"/></svg>
<div class="t" style="left:1729.8px;top:782.7px;font-size:17.5px;color:#fff;font-weight:normal;letter-spacing:-0.2px;-webkit-text-stroke:0.35px #fff;">Done</div>
<svg class="abs" style="left:1819px;top:785px;" width="14" height="14" viewBox="0 0 14 14"><path d="M1.5,1.5 L12.5,12.5 M12.5,1.5 L1.5,12.5" stroke="#1f2328" stroke-width="2.2"/></svg>
<div class="abs" style="left:413px;top:823px;width:1452px;height:1.2px;background:#e2e2e2"></div>
<svg class="abs" style="left:436px;top:863px;" width="28" height="28" viewBox="0 0 28 28"><path d="M11,22.8 H3.2 Q1.2,22.8 1.2,20.8 V8.5 Q1.2,6.5 3.2,6.5 H23.8 Q25.8,6.5 25.8,8.5 V13" fill="none" stroke="#111" stroke-width="2.4"/><path d="M8.5,7 V3 Q8.5,1.2 10.3,1.2 H16.7 Q18.5,1.2 18.5,3 V7" fill="none" stroke="#111" stroke-width="2.3"/><circle cx="20.5" cy="21" r="6.5" fill="#111"/><path d="M20,17.5 V21 L22.5,23" stroke="#fff" stroke-width="1.4" fill="none"/></svg>
<div class="t" style="left:490.8px;top:847.1px;font-size:17px;color:#1f2328;font-weight:normal;letter-spacing:0.8px;">New Work Order <b style="letter-spacing:0.4px">WO-000255</b> For <b style="letter-spacing:0.4px">Edgar Ryan</b>'s <b style="letter-spacing:0.4px">123 South Main Street, Royal Oak, Michigan 48067</b></div>
<div class="t" style="left:490.8px;top:867.9px;font-size:17px;color:#1f2328;font-weight:normal;letter-spacing:0.8px;">Pending Delegation</div>
<div class="t" style="left:490.8px;top:888.9px;font-size:17px;color:#1f2328;font-weight:normal;letter-spacing:0.8px;">May. 18th, 2024</div>
<div class="abs" style="left:1371px;top:855.5px;width:163px;height:39px;background:#f8f9fa;border:1px solid #eceef0;border-radius:5px"></div>
<div class="t" style="left:1387.7px;top:866.3px;font-size:18px;color:#3c4146;font-weight:normal;letter-spacing:0px;">Select Action</div>
<svg class="abs" style="left:1500px;top:870.5px;" width="12" height="8" viewBox="0 0 12 8"><path d="M1.5,1.5 L6,6 L10.5,1.5" stroke="#3c4146" stroke-width="1.6" fill="none" stroke-linecap="round"/></svg>
<div class="t" style="left:1566.3px;top:865.8px;font-size:17px;color:#e8141a;font-weight:normal;letter-spacing:0px;-webkit-text-stroke:0.35px #e8141a;">Snooze</div>
<svg class="abs" style="left:1632px;top:864.5px;" width="22" height="22" viewBox="0 0 22 22"><g stroke="#e8141a" fill="none" stroke-width="1.5" stroke-linejoin="round"><path d="M1.3,17.3 H17.3 Q15,15 15,11 V9.5 M1.3,17.3 Q3.8,15 3.8,11 Q3.8,5 9.5,3.8 Q10.5,3.6 11.5,3.8"/><path d="M7.5,17.8 Q7.5,20.3 9.5,20.3 Q11.5,20.3 11.5,17.8"/><path d="M7,8.8 H10.8 L7,12.8 H10.8" stroke-width="1.4"/><path d="M14.5,1.3 H20.4 L14.5,7.4 H20.6" stroke-width="1.6"/></g></svg>
<div class="abs" style="left:1687.8px;top:854.9px;width:98px;height:41.6px;background:#ee1515;border-radius:5px"></div>
<svg class="abs" style="left:1704px;top:870.5px;" width="20" height="12" viewBox="0 0 20 12"><path d="M2,5.5 L6,9.2 M6.7,5.5 L10.5,9.2 L18.6,1 M10.5,4.5 L13.6,1.2" stroke="#fff" stroke-width="1.6" fill="none" stroke-linecap="round"/></svg>
<div class="t" style="left:1729.8px;top:866.2px;font-size:17.5px;color:#fff;font-weight:normal;letter-spacing:-0.2px;-webkit-text-stroke:0.35px #fff;">Done</div>
<svg class="abs" style="left:1819px;top:868.5px;" width="14" height="14" viewBox="0 0 14 14"><path d="M1.5,1.5 L12.5,12.5 M12.5,1.5 L1.5,12.5" stroke="#1f2328" stroke-width="2.2"/></svg>
<div class="abs" style="left:413px;top:918px;width:1452px;height:1.2px;background:#e2e2e2"></div>
<svg class="abs" style="left:436px;top:946.5px;" width="28" height="28" viewBox="0 0 28 28"><rect x="1.2" y="6.5" width="24.6" height="16.3" rx="2" fill="none" stroke="#111" stroke-width="2.4"/><path d="M8.5,7 V3 Q8.5,1.2 10.3,1.2 H16.7 Q18.5,1.2 18.5,3 V7" fill="none" stroke="#111" stroke-width="2.3"/></svg>
<div class="t" style="left:490.8px;top:941.6px;font-size:17px;color:#1f2328;font-weight:normal;letter-spacing:0.9px;">Job <b style="letter-spacing:0.47px">JOB-000153</b> at <b style="letter-spacing:0.47px">343 Half Acre Road</b> was marked Complete by <b style="letter-spacing:0.47px">Aaron Smith</b></div>
<div class="t" style="left:490.8px;top:962.6px;font-size:17px;color:#1f2328;font-weight:normal;letter-spacing:0.8px;">May. 18th, 2024</div>
<div class="abs" style="left:1371px;top:939.5px;width:163px;height:39px;background:#f8f9fa;border:1px solid #eceef0;border-radius:5px"></div>
<div class="t" style="left:1387.7px;top:950.3px;font-size:18px;color:#3c4146;font-weight:normal;letter-spacing:0px;">Select Action</div>
<svg class="abs" style="left:1500px;top:954.5px;" width="12" height="8" viewBox="0 0 12 8"><path d="M1.5,1.5 L6,6 L10.5,1.5" stroke="#3c4146" stroke-width="1.6" fill="none" stroke-linecap="round"/></svg>
<div class="t" style="left:1566.3px;top:949.8px;font-size:17px;color:#e8141a;font-weight:normal;letter-spacing:0px;-webkit-text-stroke:0.35px #e8141a;">Snooze</div>
<svg class="abs" style="left:1632px;top:948.5px;" width="22" height="22" viewBox="0 0 22 22"><g stroke="#e8141a" fill="none" stroke-width="1.5" stroke-linejoin="round"><path d="M1.3,17.3 H17.3 Q15,15 15,11 V9.5 M1.3,17.3 Q3.8,15 3.8,11 Q3.8,5 9.5,3.8 Q10.5,3.6 11.5,3.8"/><path d="M7.5,17.8 Q7.5,20.3 9.5,20.3 Q11.5,20.3 11.5,17.8"/><path d="M7,8.8 H10.8 L7,12.8 H10.8" stroke-width="1.4"/><path d="M14.5,1.3 H20.4 L14.5,7.4 H20.6" stroke-width="1.6"/></g></svg>
<div class="abs" style="left:1687.8px;top:938.9px;width:98px;height:41.6px;background:#ee1515;border-radius:5px"></div>
<svg class="abs" style="left:1704px;top:954.5px;" width="20" height="12" viewBox="0 0 20 12"><path d="M2,5.5 L6,9.2 M6.7,5.5 L10.5,9.2 L18.6,1 M10.5,4.5 L13.6,1.2" stroke="#fff" stroke-width="1.6" fill="none" stroke-linecap="round"/></svg>
<div class="t" style="left:1729.8px;top:950.2px;font-size:17.5px;color:#fff;font-weight:normal;letter-spacing:-0.2px;-webkit-text-stroke:0.35px #fff;">Done</div>
<svg class="abs" style="left:1819px;top:952.5px;" width="14" height="14" viewBox="0 0 14 14"><path d="M1.5,1.5 L12.5,12.5 M12.5,1.5 L1.5,12.5" stroke="#1f2328" stroke-width="2.2"/></svg>
<div class="abs" style="left:413px;top:991px;width:1452px;height:1.2px;background:#e2e2e2"></div>
<div class="abs" style="left:1865.5px;top:760px;width:6.5px;height:243px;background:#fafafa;border-left:1px solid #eee"></div>
<div class="abs" style="left:1866px;top:760px;width:6px;height:75px;background:#cfd0d2;border-radius:3px"></div>
<div class="abs" style="left:1825.5px;top:821.5px;width:60.5px;height:60.5px;border-radius:50%;background:#e91e2d;box-shadow:0 2px 8px rgba(0,0,0,.15)"></div>
<svg class="abs" style="left:1842px;top:836px;" width="29" height="32" viewBox="0 0 29 32"><path d="M1.2,4 Q1.2,1 4.2,1 H24 Q27,1 27,4 V30.6 L19.5,27.8 H4.2 Q1.2,27.8 1.2,24.8z" fill="#fff"/><path d="M4.6,19.6 Q14.2,27 23.4,19.6" stroke="#e91e2d" stroke-width="1.5" fill="none" stroke-linecap="round"/></svg>
<div class="abs" style="left:1911px;top:94px;width:4px;height:909px;background:#f1f1f1"></div>
<div class="abs" style="left:1911px;top:94px;width:4px;height:216px;background:#1b1f2d"></div>
<div class="abs" style="left:1681px;top:168.5px;width:200px;height:288px;background:#f6f6f6;border-radius:10px;box-shadow:0 4px 14px rgba(0,0,0,.10)"></div>
<div class="t" style="left:1724.4px;top:186.0px;font-size:18px;color:#3f454d;font-weight:normal;letter-spacing:-0.35px;">Edit Profile</div>
<div class="t" style="left:1724.4px;top:226.6px;font-size:18px;color:#3f454d;font-weight:normal;letter-spacing:-0.35px;">Manage Team</div>
<div class="t" style="left:1724.4px;top:267.6px;font-size:18px;color:#3f454d;font-weight:normal;letter-spacing:-0.75px;">Refer &amp; Earn</div>
<div class="t" style="left:1724.4px;top:309.8px;font-size:18px;color:#3f454d;font-weight:normal;letter-spacing:-0.35px;">Settings</div>
<svg class="abs" style="left:1691px;top:187px;" width="17" height="17" viewBox="0 0 17 17"><path d="M13,9.5 V14.5 Q13,15.7 11.8,15.7 H2.7 Q1.5,15.7 1.5,14.5 V5.2 Q1.5,4 2.7,4 H7.5" stroke="#5f656c" stroke-width="1.8" fill="none"/><path d="M6.5,11 L7,8 L13.5,1.5 L16,4 L9.5,10.5z" stroke="#5f656c" stroke-width="1.7" fill="none" stroke-linejoin="round"/></svg>
<svg class="abs" style="left:1692px;top:228px;" width="16" height="15" viewBox="0 0 16 15"><g fill="#5f656c"><circle cx="3" cy="3.5" r="1.6"/><circle cx="8" cy="2" r="1.8"/><circle cx="13" cy="3.5" r="1.6"/><path d="M0.5,7 H4 V12 Q1,12 0.5,10z"/><path d="M12,7 H15.5 V10 Q15,12 12,12z"/><path d="M4.5,5.5 H11.5 V12.5 Q11,14.5 8,14.5 Q5,14.5 4.5,12.5z"/></g></svg>
<svg class="abs" style="left:1692px;top:270px;" width="17" height="17" viewBox="0 0 17 17"><path d="M1,13 Q1,8 5,5 L10,3 L14,11 L9,13.5 Q4,15 1,13z" fill="#5f656c"/><path d="M4,14 Q4.5,16.5 7,16" stroke="#5f656c" stroke-width="1.5" fill="none"/><g stroke="#5f656c" stroke-width="1.2"><line x1="12" y1="2.5" x2="13" y2="0.5"/><line x1="14" y1="4" x2="16" y2="3"/><line x1="14.5" y1="6.5" x2="16.5" y2="6.5"/></g></svg>
<svg class="abs" style="left:1692px;top:310px" width="16" height="16" viewBox="0 0 16 16"><path d="M8,0.8 L9.5,1 L9.9,3 L11.5,3.8 L13.2,2.6 L14.3,3.8 L13.1,5.5 L13.8,7.1 L15.2,7.5 L15.2,9 L13.7,9.5 L13.1,11 L14.2,12.6 L13.1,13.7 L11.4,12.6 L9.9,13.2 L9.5,15.2 L7.9,15.2 L7.5,13.2 L6,12.6 L4.3,13.7 L3.2,12.6 L4.3,11 L3.7,9.5 L0.9,9 L0.9,7.5 L3.7,7.1 L4.3,5.5 L3.2,3.8 L4.3,2.6 L6,3.8 L7.5,3 L7.9,1z" fill="none" stroke="#5f656c" stroke-width="1.4" stroke-linejoin="round"/><circle cx="8.5" cy="8.3" r="2.5" fill="none" stroke="#5f656c" stroke-width="1.5"/></svg>
<div class="abs" style="left:1686px;top:356px;width:190px;height:1.2px;background:#a5aab0"></div>
<div class="t" style="left:1691.5px;top:367.0px;font-size:15px;color:#e8141a;font-weight:normal;letter-spacing:0px;-webkit-text-stroke:0.35px #e8141a;">Logout</div>
<svg class="abs" style="left:1750px;top:372px;" width="10" height="14" viewBox="0 0 10 14"><path d="M3,3.5 L7,7.5 L3,11.5" stroke="#e8141a" stroke-width="1.6" fill="none"/></svg>
<div class="abs" style="left:1691px;top:410px;width:84px;height:31.5px;background:transparent;border:1.5px solid #111;border-radius:4px"></div>
<svg class="abs" style="left:1698px;top:416px;" width="15" height="19" viewBox="0 0 15 19"><path d="M7.5,4.5 Q9,4.5 10.5,3.5 Q12.5,2.8 14,4.7 Q11.8,6.2 12.2,8.8 Q12.6,11.3 14.3,12 Q13.6,14.5 12,16.5 Q10.8,18 9.5,17.5 Q8,16.8 6.8,17.3 Q5.3,18 4,16.5 Q0.5,12.5 1.3,8 Q2,4.5 5,4.4 Q6.3,4.4 7.5,4.5z" fill="#000"/><path d="M7.8,3.8 Q7.8,1 10.8,0.5 Q10.8,3.2 7.8,3.8z" fill="#000"/></svg>
<div class="t" style="left:1716.5px;top:418.1px;font-size:5.2px;color:#222;font-weight:normal;letter-spacing:0px;">Download on the</div>
<div class="t" style="left:1716.5px;top:423.3px;font-size:12px;color:#000;font-weight:normal;letter-spacing:-0.4px;">App Store</div>
<div class="abs" style="left:1787px;top:410px;width:82.5px;height:31.5px;background:transparent;border:1.5px solid #111;border-radius:4px"></div>
<svg class="abs" style="left:1793px;top:417px;" width="17" height="19" viewBox="0 0 17 19"><path d="M1,1 L10,9.5 L1,18z" fill="#2dc3f5"/><path d="M1,1 L12.5,7.3 L10,9.5z" fill="#33d073"/><path d="M1,18 L12.5,11.7 L10,9.5z" fill="#f1394b"/><path d="M12.5,7.3 L16,9.5 L12.5,11.7 L10,9.5z" fill="#fec52d"/></svg>
<div class="t" style="left:1813.0px;top:418.1px;font-size:5.2px;color:#222;font-weight:bold;letter-spacing:0px;">GET IT ON</div>
<div class="t" style="left:1813.0px;top:423.9px;font-size:10.8px;color:#000;font-weight:normal;letter-spacing:-0.6px;">Google Play</div>
<div class="abs" style="left:1680px;top:213px;width:197px;height:48px;border:5px solid #e31b1b"></div>
</body></html>
